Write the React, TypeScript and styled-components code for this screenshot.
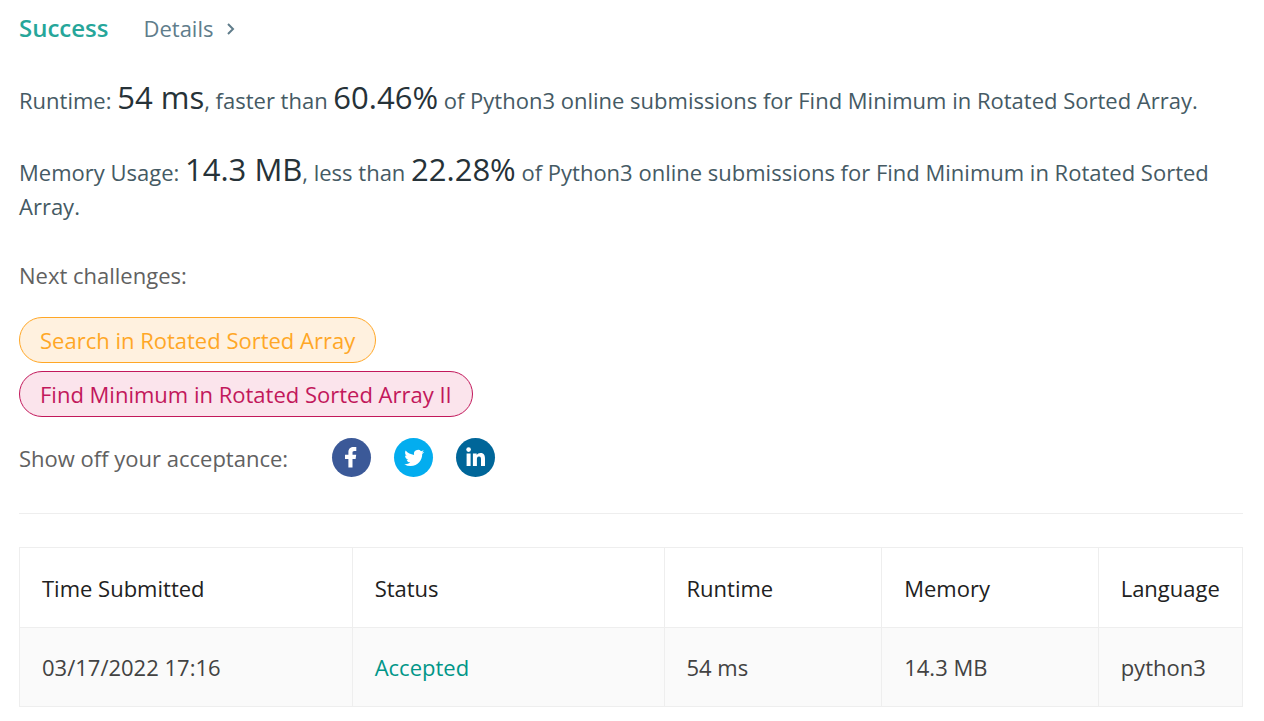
import React from "react";
import styled, { createGlobalStyle } from "styled-components";

const GlobalStyle = createGlobalStyle`
  *, *::before, *::after { box-sizing: border-box; }
  body {
    margin: 0;
    background: #fff;
    color: #424242;
    font-family: "Segoe UI", "Open Sans", "Noto Sans", sans-serif;
    font-size: 22px;
    line-height: 34px;
  }
`;

const Page = styled.main`
  padding: 11px 21px 14px 19px;
`;

const Header = styled.header`
  display: flex;
  align-items: center;
  gap: 35px;
  margin-bottom: 35px;
`;

const Status = styled.h1`
  margin: 0;
  font-size: 24px;
  line-height: 34px;
  font-weight: 600;
  color: #26a69a;
`;

const DetailsLink = styled.a`
  display: flex;
  align-items: center;
  gap: 13px;
  color: #607d8b;
  text-decoration: none;
`;

const Summary = styled.p`
  margin: 0 0 35px;
  color: #455a64;
`;

const Figure = styled.span`
  font-size: 31px;
  font-weight: 400;
  color: #263238;
`;

const SectionTitle = styled.h2`
  margin: 0 0 25px;
  font-size: 22px;
  font-weight: 400;
  color: #616161;
`;

const Challenges = styled.nav`
  display: flex;
  flex-direction: column;
  align-items: flex-start;
  gap: 8px;
`;

const tones = {
  medium: { ink: "#ffa726", fill: "#fff1df" },
  hard: { ink: "#c2185b", fill: "#fbe4ec" },
};

const Challenge = styled.a<{ $tone: keyof typeof tones }>`
  padding: 5px 20px;
  border: 1px solid ${(p) => tones[p.$tone].ink};
  border-radius: 23px;
  background: ${(p) => tones[p.$tone].fill};
  color: ${(p) => tones[p.$tone].ink};
  text-decoration: none;
`;

const Share = styled.div`
  display: flex;
  align-items: center;
  gap: 23px;
  margin-top: 21px;
  color: #616161;
`;

const ShareLabel = styled.span`
  margin-right: 21px;
`;

const ShareButton = styled.button<{ $color: string }>`
  width: 39px;
  height: 39px;
  padding: 0;
  border: 0;
  border-radius: 50%;
  background: ${(p) => p.$color};
  cursor: pointer;

  svg {
    display: block;
    width: 100%;
    height: 100%;
    fill: #fff;
  }
`;

const Divider = styled.hr`
  margin: 36px 0 33px;
  border: 0;
  border-top: 1px solid #eee;
`;

const Table = styled.table`
  width: 100%;
  border-collapse: collapse;
  table-layout: fixed;
`;

const cell = `
  border: 1px solid #eee;
  text-align: left;
  font-weight: 400;
`;

const HeadCell = styled.th<{ $width: string }>`
  ${cell}
  width: ${(p) => p.$width};
  padding: 23px 0 22px 22px;
  color: #212121;
`;

const Cell = styled.td`
  ${cell}
  padding: 22px 0 22px 22px;
  background: #fafafa;
`;

const AcceptedLink = styled.a`
  color: #009688;
  text-decoration: none;
`;

const columns = [
  { title: "Time Submitted", width: "27.2%" },
  { title: "Status", width: "25.5%" },
  { title: "Runtime", width: "17.8%" },
  { title: "Memory", width: "17.7%" },
  { title: "Language", width: "11.8%" },
];

export default function App() {
  return (
    <>
      <GlobalStyle />
      <Page>
        <Header>
          <Status>Success</Status>
          <DetailsLink href="#details">
            Details
            <svg width="10" height="14" viewBox="0 0 10 14" fill="none" stroke="#607d8b" strokeWidth="2" aria-hidden="true">
              <path d="M2 3l5 5-5 5" />
            </svg>
          </DetailsLink>
        </Header>

        <Summary>
          Runtime: <Figure>54 ms</Figure>, faster than <Figure>60.46%</Figure> of Python3 online
          submissions for Find Minimum in Rotated Sorted Array.
        </Summary>
        <Summary>
          Memory Usage: <Figure>14.3 MB</Figure>, less than <Figure>22.28%</Figure> of Python3 online
          submissions for Find Minimum in Rotated Sorted Array.
        </Summary>

        <SectionTitle>Next challenges:</SectionTitle>
        <Challenges aria-label="Next challenges">
          <Challenge href="#search" $tone="medium">Search in Rotated Sorted Array</Challenge>
          <Challenge href="#minimum" $tone="hard">Find Minimum in Rotated Sorted Array II</Challenge>
        </Challenges>

        <Share>
          <ShareLabel>Show off your acceptance:</ShareLabel>
          <ShareButton type="button" aria-label="Facebook" $color="#3b5998">
            <svg viewBox="0 0 39 39">
              <path d="M16.4 29.5V21H13v-4.2h3.4v-2.6c0-3.6 2.1-5.3 5.3-5.3 1 0 2 .1 2.6.2v3.8h-2c-1.4 0-1.8.7-1.8 1.8v2.1h3.7l-.6 4.2h-3.1v8.5z" />
            </svg>
          </ShareButton>
          <ShareButton type="button" aria-label="Twitter" $color="#03adef">
            <svg viewBox="0 0 39 39">
              <g transform="translate(10.3 10) scale(.83)">
                <path d="M23.953 4.57a10 10 0 01-2.825.775 4.958 4.958 0 002.163-2.723c-.951.555-2.005.959-3.127 1.184a4.92 4.92 0 00-8.384 4.482C7.69 8.095 4.067 6.13 1.64 3.162a4.822 4.822 0 00-.666 2.475c0 1.71.87 3.213 2.188 4.096a4.904 4.904 0 01-2.228-.616v.06a4.923 4.923 0 003.946 4.827 4.996 4.996 0 01-2.212.085 4.936 4.936 0 004.604 3.417 9.867 9.867 0 01-6.102 2.105c-.39 0-.779-.023-1.17-.067a13.995 13.995 0 007.557 2.209c9.053 0 13.998-7.496 13.998-13.985 0-.21 0-.42-.015-.63A9.935 9.935 0 0024 4.59z" />
              </g>
            </svg>
          </ShareButton>
          <ShareButton type="button" aria-label="LinkedIn" $color="#006699">
            <svg viewBox="0 0 39 39">
              <circle cx="12.6" cy="11.6" r="2.3" />
              <path d="M10.6 15.4h4V28h-4zM16.9 15.4h3.8v1.7c.8-1.3 2.1-2 3.8-2 3.7 0 4.5 2.5 4.5 5.6V28h-4v-6.3c0-1.7-.1-3.2-2-3.2s-2.1 1.5-2.1 3.1V28h-4z" />
            </svg>
          </ShareButton>
        </Share>

        <Divider />

        <Table>
          <thead>
            <tr>
              {columns.map((c) => (
                <HeadCell key={c.title} scope="col" $width={c.width}>{c.title}</HeadCell>
              ))}
            </tr>
          </thead>
          <tbody>
            <tr>
              <Cell>03/17/2022 17:16</Cell>
              <Cell><AcceptedLink href="#submission">Accepted</AcceptedLink></Cell>
              <Cell>54 ms</Cell>
              <Cell>14.3 MB</Cell>
              <Cell>python3</Cell>
            </tr>
          </tbody>
        </Table>
      </Page>
    </>
  );
}
